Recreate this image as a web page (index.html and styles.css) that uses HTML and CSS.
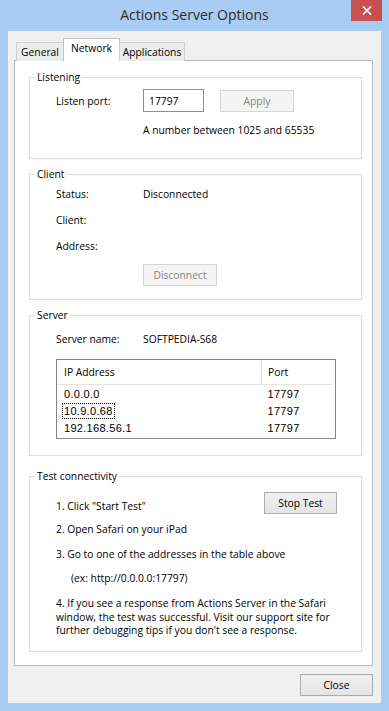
FILE: index.html
```html
<!DOCTYPE html>
<html lang="en">
<head>
  <meta charset="UTF-8" />
  <title>Actions Server Options</title>
  <link rel="stylesheet" href="styles.css">
</head>
<body>
  <div class="window">

    <div class="titlebar">
      <span class="title">Actions Server Options</span>
      <button class="close-x" aria-label="Close">
        <svg width="10" height="9" viewBox="0 0 10 9">
          <path d="M1 0.5 L9 8.5 M9 0.5 L1 8.5" stroke="#fff" stroke-width="1.7" fill="none"/>
        </svg>
      </button>
    </div>

    <div class="client">
      <div class="tabs">
        <div class="tab tab-general">General</div>
        <div class="tab tab-network active">Network</div>
        <div class="tab tab-apps">Applications</div>
      </div>

      <div class="panel">

        <fieldset class="group">
          <legend>Listening</legend>
          <div class="group-body listen-body">
            <div class="field">
              <span class="field-label">Listen port:</span>
              <input class="port-input" type="text" value="17797">
              <button class="btn btn-apply" disabled>Apply</button>
            </div>
            <div class="hint">A number between 1025 and 65535</div>
          </div>
        </fieldset>

        <fieldset class="group">
          <legend>Client</legend>
          <div class="group-body client-body">
            <div class="row"><span class="field-label">Status:</span><span>Disconnected</span></div>
            <div class="row"><span class="field-label">Client:</span></div>
            <div class="row"><span class="field-label">Address:</span></div>
            <button class="btn btn-disconnect" disabled>Disconnect</button>
          </div>
        </fieldset>

        <fieldset class="group">
          <legend>Server</legend>
          <div class="group-body server-body">
            <div class="row"><span class="field-label">Server name:</span><span>SOFTPEDIA-S68</span></div>
            <div class="list">
              <table>
                <thead>
                  <tr><th class="col-ip">IP Address</th><th class="col-port">Port</th></tr>
                </thead>
                <tbody>
                  <tr><td>0.0.0.0</td><td>17797</td></tr>
                  <tr><td><span class="focus">10.9.0.68</span></td><td>17797</td></tr>
                  <tr><td>192.168.56.1</td><td>17797</td></tr>
                </tbody>
              </table>
            </div>
          </div>
        </fieldset>

        <fieldset class="group group-test">
          <legend>Test connectivity</legend>
          <div class="group-body test-body">
            <div class="step-first">
              <span>1. Click "Start Test"</span>
              <button class="btn btn-stop">Stop Test</button>
            </div>
            <div class="step">2. Open Safari on your iPad</div>
            <div class="step">3. Go to one of the addresses in the table above</div>
            <div class="step step-ex">(ex: http://0.0.0.0:17797)</div>
            <p class="step-note">
              <span>4. If you see a response from Actions Server in the Safari</span>
              <span>window, the test was successful. Visit our support site for</span>
              <span>further debugging tips if you don't see a response.</span>
            </p>
          </div>
        </fieldset>

      </div>

      <div class="footer">
        <button class="btn btn-close">Close</button>
      </div>
    </div>

  </div>
</body>
</html>
```

FILE: styles.css
```css
html, body { margin: 0; padding: 0; height: 100%; overflow: hidden; }
body {
  font-family: "Open Sans", "Noto Sans", sans-serif;
  font-size: 10.3px;
  color: #000;
  background: #a9cdf2;
}

/* window frame */
.window {
  height: 711px; box-sizing: border-box;
  padding: 0 8px 8px;
  display: flex; flex-direction: column;
}
.titlebar {
  height: 31px;
  display: grid; grid-template-columns: 1fr auto 1fr;
  align-items: start;
}
.title {
  grid-column: 2;
  font-size: 14px; line-height: 30px;
  color: #2b2b2b;
}
.close-x {
  grid-column: 3; justify-self: end;
  width: 31px; height: 21px; margin-right: -1px;
  padding: 0; border: 0;
  background: #c75050;
  display: flex; align-items: center; justify-content: center;
}

.client {
  flex: 1;
  background: #f0f0f0;
  padding: 7px 8px 7px 6px;
  display: flex; flex-direction: column;
}

/* tabs */
.tabs {
  display: flex; align-items: flex-end;
  height: 23px; margin: 0 0 -1px 2px;
  position: relative; z-index: 1;
}
.tab {
  height: 19px; box-sizing: border-box;
  line-height: 18px; text-align: center;
  border: 1px solid #d0d0d0; border-bottom: 0;
  background: #ececec;
}
.tab + .tab { margin-left: -1px; }
.tab-general { width: 48px; }
.tab-network { width: 57px; }
.tab-apps { width: 66px; }
.tab.active {
  height: 23px; line-height: 18px;
  background: #fff;
  border-color: #c2c2c2;
}

.panel {
  height: 606px; box-sizing: border-box;
  border: 1px solid #b9b9b9;
  background: #fff;
  padding: 8px 10px 0 14px;
}

/* group boxes */
.group {
  margin: 0 0 7px; padding: 0; min-width: 0;
  border: 1px solid #dcdcdc;
}
.group legend {
  margin-left: 5px; padding: 0 2px;
  line-height: 16px;
}
.group-body { padding-left: 26px; }
.field-label { display: inline-block; width: 87px; }

.listen-body { padding-top: 4px; padding-bottom: 20px; }
.field { display: flex; align-items: center; height: 23px; }
.port-input {
  width: 61px; height: 23px; box-sizing: border-box;
  border: 1px solid #8f8f8f; padding: 0 5px;
  font: inherit; color: #000;
}
.btn-apply { margin-left: 16px; width: 74px; height: 21px; }
.hint { margin: 10px 0 0 87px; line-height: 16px; }

.row { line-height: 16px; height: 16px; display: flex; }
.client-body { padding-top: 4px; padding-bottom: 13px; }
.client-body .row + .row { margin-top: 10px; }
.btn-disconnect { margin: 10px 0 0 87px; width: 74px; }

.server-body { padding-top: 8px; padding-bottom: 16px; }
.group + .group-test { margin-top: 12px; }

/* list view */
.list {
  margin-top: 12px; width: 280px; height: 80px; box-sizing: border-box;
  border: 1px solid #828790;
}
.list table { border-collapse: collapse; width: 276px; }
.list th {
  height: 24px; padding: 0 0 0 7px;
  font-weight: normal; text-align: left;
  border-bottom: 1px solid #e5e5e5;
}
.list th.col-ip { width: 197px; border-right: 1px solid #e5e5e5; }
.list th.col-port { padding-left: 6px; }
.list td {
  height: 17px; padding: 0 0 0 7px;
  font-family: "Liberation Sans", Arial, sans-serif;
  font-size: 11px; letter-spacing: 0.3px;
}
.list td + td { padding-left: 6px; }
.focus { outline: 1px dotted #000; outline-offset: 1px; }

/* test connectivity */
.test-body { padding-top: 8px; padding-bottom: 13px; padding-right: 24px; }
.step-first {
  display: flex; justify-content: space-between; align-items: flex-end;
  line-height: 16px;
}
.btn-stop { width: 73px; }
.step { line-height: 16px; }
.step-first + .step { margin-top: 7px; }
.step + .step { margin-top: 9px; }
.step-ex { padding-left: 15px; }
.step + .step-ex { margin-top: 8px; }
.step-note { margin: 11px 0 0; white-space: nowrap; }
.step-note span { display: block; line-height: 13.5px; }

/* buttons */
.btn {
  height: 22px; padding: 0;
  font: inherit; color: #000;
  border: 1px solid #acacac;
  background: linear-gradient(#f0f0f0, #e5e5e5);
}
.btn:disabled {
  color: #838383;
  border-color: #d5d5d5;
  background: #f4f4f4;
}
.footer { display: flex; justify-content: flex-end; margin-top: 8px; }
.btn-close { width: 73px; }
```
